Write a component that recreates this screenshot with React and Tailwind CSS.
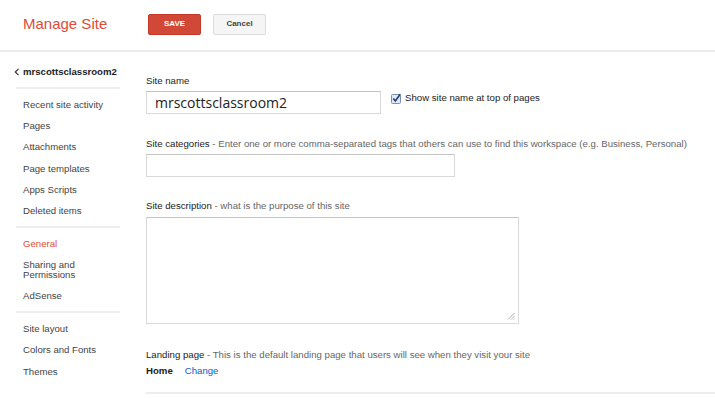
import React from "react";

const navGroups = [
  [
    { label: "Recent site activity" },
    { label: "Pages" },
    { label: "Attachments" },
    { label: "Page templates" },
    { label: "Apps Scripts" },
    { label: "Deleted items" },
  ],
  [
    { label: "General", active: true },
    { label: "Sharing and Permissions", two: true },
    { label: "AdSense" },
  ],
  [
    { label: "Site layout" },
    { label: "Colors and Fonts" },
    { label: "Themes" },
  ],
];

function NavItem({ item }) {
  if (item.two) {
    return (
      <div className="h-[31px] flex flex-col justify-center pl-[7px] leading-[10px] text-[#444]">
        <span>Sharing and</span>
        <span>Permissions</span>
      </div>
    );
  }
  return (
    <div
      className={
        "h-[21.3px] flex items-center pl-[7px] leading-[12px] " +
        (item.active ? "text-[#dd4b39]" : "text-[#444]")
      }
    >
      {item.label}
    </div>
  );
}

export default function App() {
  return (
    <div
      className="w-[715px] h-[398px] overflow-hidden bg-white"
      style={{ fontFamily: '"Liberation Sans", Arial, sans-serif' }}
    >
      {/* Header */}
      <div className="h-[52px] flex items-center border-b-2 border-[#ebebeb] pb-[2px]">
        <div className="pl-[23px] w-[148px] text-[15px] leading-[18px] text-[#dd4b39]">
          Manage Site
        </div>
        <button className="w-[53px] h-[21px] rounded-[2px] bg-[#d14836] border border-[#c53727] text-white text-[8px] font-bold leading-none">
          SAVE
        </button>
        <button className="ml-[12px] w-[53px] h-[21px] rounded-[2px] bg-[#f5f5f5] border border-[#dcdcdc] text-[#444] text-[8px] font-bold leading-none">
          Cancel
        </button>
      </div>

      <div className="flex">
        {/* Sidebar */}
        <div className="ml-4 w-[104px] text-[9.6px]">
          <div className="h-[35px] pt-[14px] flex items-start leading-[12px] font-bold text-[#222]">
            <svg
              width="6"
              height="8"
              viewBox="0 0 6 8"
              className="-ml-[2px] mt-[2px] mr-[3px]"
            >
              <path d="M4.5 0.8 L1.3 4 L4.5 7.2" fill="none" stroke="#333" strokeWidth="1.2" />
            </svg>
            <span>mrscottsclassroom2</span>
          </div>
          {navGroups.map((group, gi) => (
            <div key={gi} className="border-t-2 border-[#eeeeee] pt-[5px] pb-[4.5px]">
              {group.map((item) => (
                <NavItem key={item.label} item={item} />
              ))}
            </div>
          ))}
        </div>

        {/* Main */}
        <div className="ml-[26px] flex-1 pt-[23px] text-[9.65px] leading-[12px] text-[#222]">
          <div>Site name</div>
          <div className="mt-[4px] flex items-start">
            <div className="w-[235px] h-[23px] border border-[#d9d9d9] border-t-[#c4c4c4] flex items-center pl-[8px] text-[14px] text-[#222]"
              style={{ fontFamily: '"Open Sans", "Noto Sans", sans-serif' }}
            >
              mrscottsclassroom2
            </div>
            <div className="ml-[10px] mt-[1px] flex items-center">
              <svg width="11" height="11" viewBox="0 0 11 11">
                <rect x="0.5" y="1.5" width="9" height="9" rx="1" fill="#dfe8f5" stroke="#7a8fa8" />
                <path d="M2.3 5.6 L4.3 8 L9.2 1.2" fill="none" stroke="#1f3e74" strokeWidth="1.6" />
              </svg>
              <span className="ml-[3px] text-[#222]">Show site name at top of pages</span>
            </div>
          </div>

          <div className="mt-[24px]">
            Site categories <span className="text-[#666]">- Enter one or more comma-separated tags that others can use to find this workspace (e.g. Business, Personal)</span>
          </div>
          <div className="mt-[4px] w-[309px] h-[23px] border border-[#d9d9d9] border-t-[#c4c4c4]" />

          <div className="mt-[23px]">
            Site description <span className="text-[#666]">- what is the purpose of this site</span>
          </div>
          <div className="mt-[5px] w-[373px] h-[107px] border border-[#d9d9d9] border-t-[#c4c4c4] flex items-end justify-end p-[3px]">
            <svg width="8" height="8" viewBox="0 0 8 8">
              <path d="M7.5 1 L1 7.5 M7.5 4 L4 7.5 M7.5 6.5 L6.5 7.5" stroke="#999" strokeWidth="0.8" />
            </svg>
          </div>

          <div className="mt-[25px]">
            Landing page <span className="text-[#666]">- This is the default landing page that users will see when they visit your site</span>
          </div>
          <div className="mt-[4px] flex">
            <span className="font-bold text-[#222]">Home</span>
            <span className="ml-[12px] text-[#1155cc]">Change</span>
          </div>
          <div className="mt-[15px] h-[2px] bg-[#eeeeee]" />
        </div>
      </div>
    </div>
  );
}
